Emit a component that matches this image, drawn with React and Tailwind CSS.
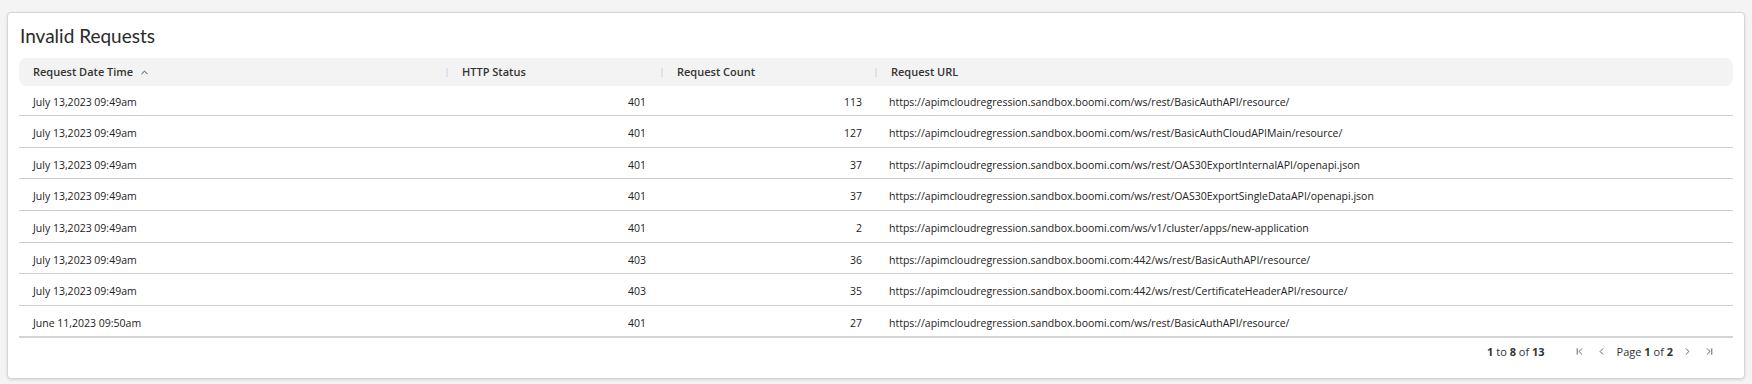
import { ChevronUp, ChevronFirst, ChevronLast, ChevronLeft, ChevronRight } from 'lucide-react'

const rows = [
  ['July 13,2023 09:49am', '401', '113', 'https://apimcloudregression.sandbox.boomi.com/ws/rest/BasicAuthAPI/resource/'],
  ['July 13,2023 09:49am', '401', '127', 'https://apimcloudregression.sandbox.boomi.com/ws/rest/BasicAuthCloudAPIMain/resource/'],
  ['July 13,2023 09:49am', '401', '37', 'https://apimcloudregression.sandbox.boomi.com/ws/rest/OAS30ExportInternalAPI/openapi.json'],
  ['July 13,2023 09:49am', '401', '37', 'https://apimcloudregression.sandbox.boomi.com/ws/rest/OAS30ExportSingleDataAPI/openapi.json'],
  ['July 13,2023 09:49am', '401', '2', 'https://apimcloudregression.sandbox.boomi.com/ws/v1/cluster/apps/new-application'],
  ['July 13,2023 09:49am', '403', '36', 'https://apimcloudregression.sandbox.boomi.com:442/ws/rest/BasicAuthAPI/resource/'],
  ['July 13,2023 09:49am', '403', '35', 'https://apimcloudregression.sandbox.boomi.com:442/ws/rest/CertificateHeaderAPI/resource/'],
  ['June 11,2023 09:50am', '401', '27', 'https://apimcloudregression.sandbox.boomi.com/ws/rest/BasicAuthAPI/resource/'],
]

function HeadCell({ children, sep }) {
  return (
    <div className="flex items-center h-full">
      {sep && <span className="w-[2px] h-[9px] bg-[#dde3ea] shrink-0" />}
      <span className="pl-[14px] flex items-center gap-[6px]">{children}</span>
    </div>
  )
}

export default function App() {
  return (
    <div className="w-[1752px] h-[384px] bg-[#f4f4f4] pt-[12px] pl-[7px] font-['Open_Sans',sans-serif] text-[#262626]">
      <div className="w-[1738px] h-[367px] bg-white border border-[#d6d6d6] rounded-[4px] shadow-[0_1px_3px_rgba(0,0,0,0.12)] px-[11px]">
        <h1 className="font-['Lato',sans-serif] text-[19px] font-normal text-[#2a2a2a] pt-[10px] h-[45px] leading-[26px] pl-[1px]">
          Invalid Requests
        </h1>
        <div className="w-[1714px]">
          <div className="grid grid-cols-[427px_215px_214px_1fr] h-[28px] bg-[#f3f3f3] rounded-[8px] text-[11px] font-semibold text-[#333]">
            <HeadCell>
              Request Date Time
              <ChevronUp size={11} strokeWidth={2} className="text-[#1d3b57]" />
            </HeadCell>
            <HeadCell sep>HTTP Status</HeadCell>
            <HeadCell sep>Request Count</HeadCell>
            <HeadCell sep>Request URL</HeadCell>
          </div>
          {rows.map((r, i) => (
            <div
              key={i}
              className={`grid grid-cols-[427px_215px_214px_1fr] items-center pt-[5px] text-[10.5px] text-[#222] ${i === 0 ? 'h-[30px]' : 'h-[31.7px]'} ${i === rows.length - 1 ? 'border-b-[2px] border-[#d4d4d4]' : 'border-b border-[#cdcdcd]'}`}
            >
              <div className="pl-[14px]">{r[0]}</div>
              <div className="text-right pr-[15px]">{r[1]}</div>
              <div className="text-right pr-[13px]">{r[2]}</div>
              <div className="pl-[14px]">{r[3]}</div>
            </div>
          ))}
          <div className="flex items-center justify-end h-[28px] text-[11px] text-[#333]">
            <span>
              <b className="font-bold">1</b> to <b className="font-bold">8</b> of <b className="font-bold">13</b>
            </span>
            <div className="flex items-center ml-[29px] mr-[18px] text-[#444]">
              <ChevronFirst size={11} strokeWidth={1.8} />
              <ChevronLeft size={11} strokeWidth={1.8} className="ml-[11px]" />
              <span className="ml-[10px] text-[#333]">
                Page <b className="font-bold">1</b> of <b className="font-bold">2</b>
              </span>
              <ChevronRight size={11} strokeWidth={1.8} className="ml-[9px]" />
              <ChevronLast size={11} strokeWidth={1.8} className="ml-[11px]" />
            </div>
          </div>
        </div>
      </div>
    </div>
  )
}
